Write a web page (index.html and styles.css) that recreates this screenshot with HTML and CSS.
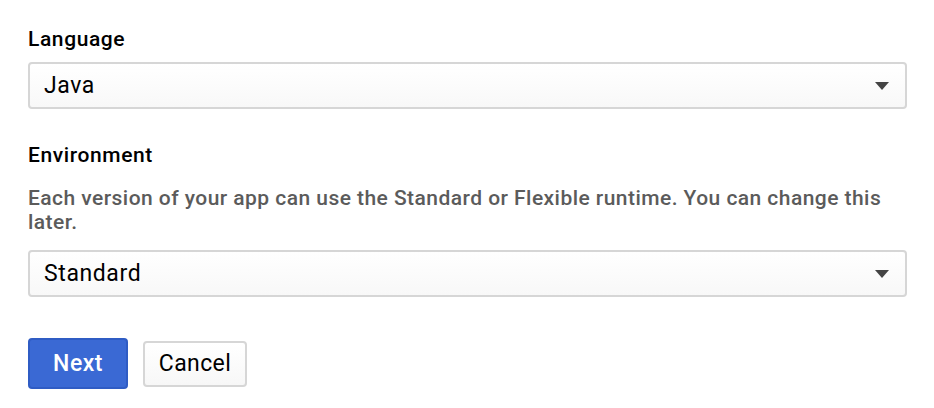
FILE: index.html
```html
<!DOCTYPE html>
<html lang="en">
<head>
    <meta charset="UTF-8">
    <meta name="viewport" content="width=device-width, initial-scale=1.0">
    <title>Create app</title>
    <link rel="stylesheet" href="styles.css">
</head>
<body>
    <form class="form">
        <div class="field field-language">
            <label class="field-label">Language</label>
            <div class="select" role="combobox">
                <span class="select-value">Java</span>
                <span class="select-arrow"></span>
            </div>
        </div>
        <div class="field field-env">
            <label class="field-label">Environment</label>
            <p class="field-help">Each version of your app can use the Standard or Flexible runtime. You can change this later.</p>
            <div class="select" role="combobox">
                <span class="select-value">Standard</span>
                <span class="select-arrow"></span>
            </div>
        </div>
        <div class="actions">
            <button type="button" class="btn btn-primary">Next</button>
            <button type="button" class="btn btn-secondary">Cancel</button>
        </div>
    </form>
</body>
</html>
```

FILE: styles.css
```css
body {
    margin: 0;
    background: #fff;
    font-family: Roboto, "Liberation Sans", Arial, sans-serif;
    color: #000;
}
.form {
    display: flex;
    flex-direction: column;
    padding: 27px 27px 0 28px;
}
.field {
    display: flex;
    flex-direction: column;
}
.field-env {
    margin-top: 34px;
}
.field-label {
    font-size: 21px;
    font-weight: 500;
    line-height: 24px;
    letter-spacing: 0.6px;
    margin-bottom: 11px;
}
.field-help {
    margin: 8px 0 16px;
    font-size: 21px;
    font-weight: 500;
    line-height: 24px;
    letter-spacing: 0.45px;
    color: #5b5b5b;
}
.select {
    display: flex;
    align-items: center;
    justify-content: space-between;
    height: 43px;
    padding: 0 16px 0 14px;
    border: 2px solid #d6d6d6;
    border-radius: 4px;
    background: linear-gradient(#fff, #f8f8f8);
}
.select-value {
    font-size: 23px;
    letter-spacing: 0.6px;
}
.select-arrow {
    width: 0;
    height: 0;
    border-left: 7.5px solid transparent;
    border-right: 7.5px solid transparent;
    border-top: 8px solid #444;
}
.actions {
    display: flex;
    align-items: center;
    gap: 15px;
    margin-top: 41px;
}
.btn {
    font-family: inherit;
    border-radius: 4px;
    cursor: pointer;
    padding: 0;
}
.btn-primary {
    width: 100px;
    height: 51px;
    background: #3a69d4;
    border: 2px solid #2f5cc4;
    color: #fff;
    font-size: 23px;
    font-weight: 500;
    letter-spacing: 0.5px;
}
.btn-secondary {
    width: 104px;
    height: 46px;
    background: linear-gradient(#fff, #f7f7f7);
    border: 2px solid #d6d6d6;
    color: #000;
    font-size: 23px;
    letter-spacing: 0.4px;
}
```
